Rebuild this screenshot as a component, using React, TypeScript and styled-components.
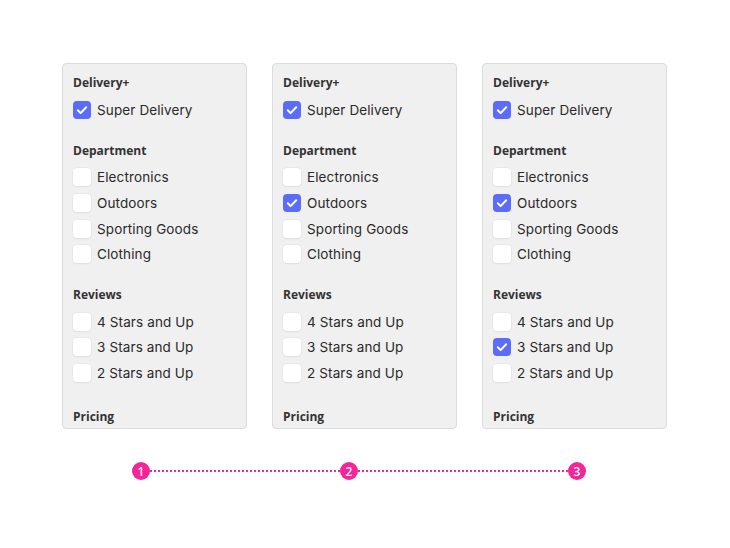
import React from "react";
import styled, { createGlobalStyle } from "styled-components";

const Global = createGlobalStyle`
  html, body { margin: 0; padding: 0; background: #ffffff; }
  body { font-family: Inter, "Noto Sans", sans-serif; }
`;

const Page = styled.div`
  width: 730px;
  height: 548px;
  display: flex;
  padding: 63px 0 0 62px;
  box-sizing: border-box;
`;

const Wrap = styled.div`
  width: 605px;
  display: flex;
  flex-direction: column;
`;

const Panels = styled.div`
  display: flex;
  gap: 25px;
`;

const Panel = styled.div`
  width: 185px;
  height: 366px;
  box-sizing: border-box;
  background: #f0f0f0;
  border: 1px solid #dcdcdc;
  border-radius: 4px;
  padding: 11px 10px 5px;
  display: flex;
  flex-direction: column;
  overflow: hidden;
`;

const Section = styled.div<{ $extra?: number }>`
  display: flex;
  flex-direction: column;
  margin-top: ${(p) => p.$extra ?? 0}px;
`;

const Heading = styled.div`
  font-family: "Open Sans", "Noto Sans", sans-serif;
  font-weight: 700;
  font-size: 12px;
  line-height: 16px;
  color: #333333;
  margin-bottom: 6px;
`;

const Row = styled.div`
  display: flex;
  align-items: center;
  gap: 6px;
  height: 25.6px;
`;

const Box = styled.span<{ $on: boolean }>`
  width: 18px;
  height: 18px;
  box-sizing: border-box;
  border-radius: 4px;
  background: ${(p) => (p.$on ? "#5a6cf8" : "#ffffff")};
  box-shadow: ${(p) => (p.$on ? "none" : "0 0 0 0.5px #e2e2e2, 0 1px 1.5px rgba(0,0,0,0.08)")};
  display: flex;
  align-items: center;
  justify-content: center;
  flex: none;
`;

const Label = styled.span`
  font-size: 13.5px;
  letter-spacing: 0.12px;
  color: #2a2a2a;
  line-height: 18px;
  white-space: nowrap;
`;

const Stepper = styled.div`
  display: flex;
  align-items: center;
  margin-top: 33px;
  padding-left: 70px;
`;

const Dot = styled.span`
  width: 18px;
  height: 18px;
  border-radius: 50%;
  background: #f4249b;
  color: #ffffff;
  font-family: "Noto Sans", sans-serif;
  font-size: 12px;
  font-weight: 500;
  display: flex;
  align-items: center;
  justify-content: center;
  flex: none;
`;

const Line = styled.span<{ $w: number }>`
  width: ${(p) => p.$w}px;
  height: 0;
  border-top: 2px dotted #f4249b;
  flex: none;
`;

const Check = () => (
  <svg width="18" height="18" viewBox="0 0 18 18">
    <polyline
      points="4.8,9.3 7.6,12.1 13.2,6.2"
      fill="none"
      stroke="#ffffff"
      strokeWidth="2"
      strokeLinecap="round"
      strokeLinejoin="round"
    />
  </svg>
);

const Item = ({ label, on }: { label: string; on: boolean }) => (
  <Row>
    <Box $on={on}>{on && <Check />}</Box>
    <Label>{label}</Label>
  </Row>
);

const departments = ["Electronics", "Outdoors", "Sporting Goods", "Clothing"];
const reviews = ["4 Stars and Up", "3 Stars and Up", "2 Stars and Up"];

const FilterPanel = ({ dept, review }: { dept?: string; review?: string }) => (
  <Panel>
    <Section>
      <Heading>Delivery+</Heading>
      <Item label="Super Delivery" on />
    </Section>
    <Section $extra={20}>
      <Heading>Department</Heading>
      {departments.map((d) => (
        <Item key={d} label={d} on={d === dept} />
      ))}
    </Section>
    <Section $extra={20}>
      <Heading>Reviews</Heading>
      {reviews.map((r) => (
        <Item key={r} label={r} on={r === review} />
      ))}
    </Section>
    <Section $extra={23}>
      <Heading>Pricing</Heading>
    </Section>
  </Panel>
);

export default function App() {
  return (
    <>
      <Global />
      <Page>
        <Wrap>
          <Panels>
            <FilterPanel />
            <FilterPanel dept="Outdoors" />
            <FilterPanel dept="Outdoors" review="3 Stars and Up" />
          </Panels>
          <Stepper>
            <Dot>1</Dot>
            <Line $w={190} />
            <Dot>2</Dot>
            <Line $w={210} />
            <Dot>3</Dot>
          </Stepper>
        </Wrap>
      </Page>
    </>
  );
}
